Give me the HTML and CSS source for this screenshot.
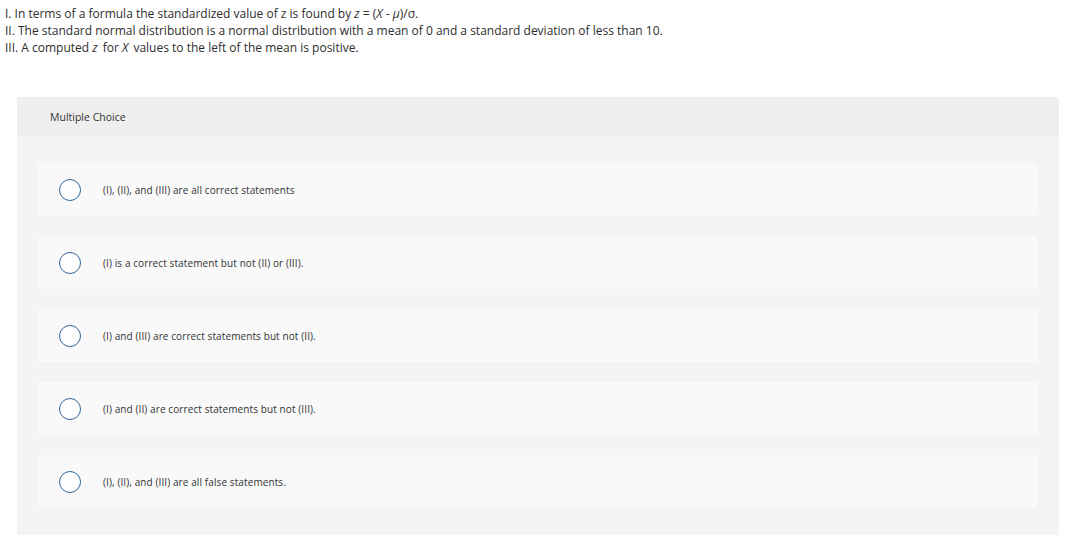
FILE: index.html
```html
<!DOCTYPE html>
<html>
<head>
<meta charset="utf-8">
<link rel="stylesheet" href="styles.css">
</head>
<body>
<div class="question">
  <p>I. In terms of a formula the standardized value of z is found by <i>z</i> = (<i>X</i> - <i>μ</i>)/σ.</p>
  <p>II. The standard normal distribution is a normal distribution with a mean of 0 and a standard deviation of less than 10.</p>
  <p>III. A computed <i class="wide">z</i> for <i class="wide">X</i> values to the left of the mean is positive.</p>
</div>
<div class="panel">
  <div class="panel-head">Multiple Choice</div>
  <div class="panel-body">
    <div class="option"><span class="radio"></span><span class="label">(I), (II), and (III) are all correct statements</span></div>
    <div class="option"><span class="radio"></span><span class="label">(I) is a correct statement but not (II) or (III).</span></div>
    <div class="option"><span class="radio"></span><span class="label">(I) and (III) are correct statements but not (II).</span></div>
    <div class="option"><span class="radio"></span><span class="label">(I) and (II) are correct statements but not (III).</span></div>
    <div class="option"><span class="radio"></span><span class="label">(I), (II), and (III) are all false statements.</span></div>
  </div>
</div>
</body>
</html>
```
FILE: styles.css
```css
html, body {
  margin: 0;
  padding: 0;
  background: #ffffff;
}
body {
  font-family: "Open Sans", "Lato", sans-serif;
  color: #2e2e2e;
  padding: 5px 0 0 5px;
}
.question p {
  margin: 0;
  font-size: 12px;
  line-height: 17px;
}
.question i {
  font-style: italic;
}
.question .wide {
  margin-right: 2px;
}
.panel {
  margin: 41px 22px 0 12px;
  background: #f4f4f4;
}
.panel-head {
  background: #efefef;
  height: 40px;
  display: flex;
  align-items: center;
  padding-left: 33px;
  font-size: 10.5px;
  color: #333;
}
.panel-body {
  padding: 26px 22px 27px 21px;
  display: flex;
  flex-direction: column;
  gap: 20px;
}
.option {
  background: #f9f9f9;
  height: 53px;
  display: flex;
  align-items: center;
  padding-left: 21px;
  border-radius: 2px;
}
.radio {
  width: 20px;
  height: 20px;
  border: 1.5px solid #336699;
  border-radius: 50%;
  background: #fff;
  flex: none;
}
.label {
  margin-left: 22px;
  font-size: 10px;
  letter-spacing: 0.1px;
  color: #333;
}
```
